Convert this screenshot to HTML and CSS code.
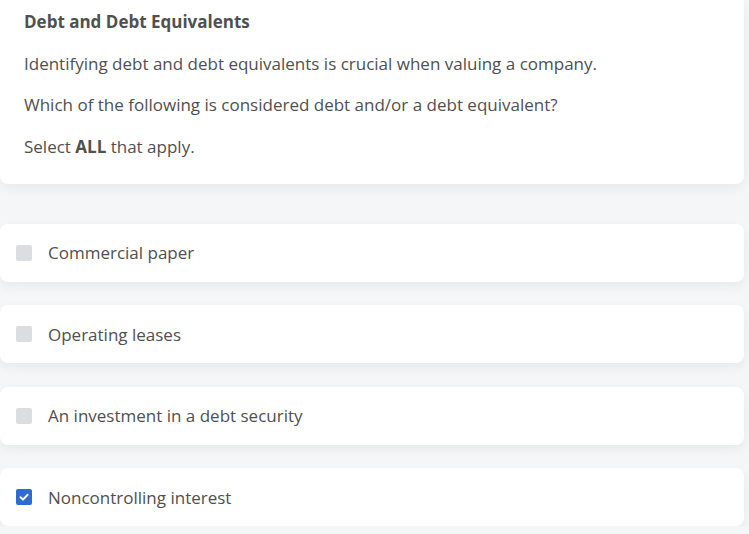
FILE: index.html
```html
<!DOCTYPE html>
<html lang="en">

<head>
  <meta charset="UTF-8">
  <title>Debt and Debt Equivalents</title>
  <link rel="stylesheet" href="styles.css">
</head>

<body>
  <div class="question">
    <h2>Debt and Debt Equivalents</h2>
    <p>Identifying debt and debt equivalents is crucial when valuing a company.</p>
    <p>Which of the following is considered debt and/or a debt equivalent?</p>
    <p>Select <b>ALL</b> that apply.</p>
  </div>

  <div class="options">
    <label class="option">
      <span class="box"></span>
      <span>Commercial paper</span>
    </label>
    <label class="option">
      <span class="box"></span>
      <span>Operating leases</span>
    </label>
    <label class="option">
      <span class="box"></span>
      <span>An investment in a debt security</span>
    </label>
    <label class="option">
      <span class="box checked">
        <svg viewBox="0 0 16 16" width="16" height="16">
          <path d="M4.5 8.3 L7 10.6 L11.6 5.8" fill="none" stroke="#fff" stroke-width="2" stroke-linecap="round" stroke-linejoin="round"/>
        </svg>
      </span>
      <span>Noncontrolling interest</span>
    </label>
  </div>
</body>

</html>
```

FILE: styles.css
```css
html {
  margin: 0;
  padding: 0;
}

body {
  margin: 0;
  padding: 0 5px 0 0;
  background: #f5f6f8;
  font-family: "Open Sans", "Noto Sans", sans-serif;
  color: #505050;
}

.question {
  background: #fff;
  border-radius: 0 0 8px 8px;
  box-shadow: 0 4px 12px rgba(0, 0, 0, 0.06);
  padding: 10px 24px 25px;

  >h2 {
    margin: 0 0 17.5px 0;
    font-size: 17px;
    font-weight: 700;
    line-height: 24px;
  }

  >p {
    margin: 0 0 17.5px 0;
    font-size: 17px;
    line-height: 24px;
  }

  >p:last-child {
    margin-bottom: 0;
  }
}

.options {
  display: flex;
  flex-direction: column;
  gap: 23.5px;
  margin-top: 40px;
}

.option {
  display: flex;
  align-items: center;
  gap: 16px;
  height: 58px;
  padding: 0 16px;
  background: #fff;
  border-radius: 8px;
  box-shadow: 0 4px 12px rgba(0, 0, 0, 0.06);
  font-size: 17px;
}

.box {
  display: block;
  width: 16px;
  height: 16px;
  border-radius: 2px;
  background: #dcdde0;
  flex-shrink: 0;

  &.checked {
    background: #2e6cd4;
  }

  >svg {
    display: block;
  }
}
```
